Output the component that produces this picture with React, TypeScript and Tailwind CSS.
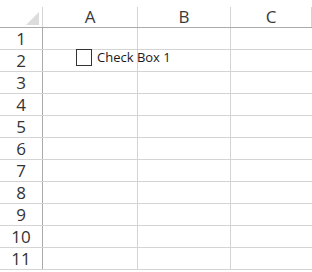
const rows = Array.from({ length: 11 }, (_, i) => i + 1);
const cols = ["A", "B", "C"];
const colWidths = ["w-[95px]", "w-[93px]", "flex-1"];

export default function App() {
  return (
    <div className="h-[272px] w-[312px] overflow-hidden bg-white font-['Open_Sans',sans-serif] text-[#3a3a3a]">
      {/* column headers */}
      <div className="flex h-[28px] border-b border-[#ababab]">
        <div className="relative w-[43px] shrink-0 pt-[7px]">
          <div className="h-[20px] border-r border-[#d4d4d4]" />
          <svg className="absolute left-[26px] top-[12px]" width="13" height="13" viewBox="0 0 13 13">
            <polygon points="13,0 13,13 0,13" fill="#dcdcdc" />
          </svg>
        </div>
        {cols.map((c, i) => (
          <div key={c} className={`${colWidths[i]} shrink-0 pt-[7px]`}>
            <div className="flex h-[20px] items-center justify-center border-r border-[#d4d4d4] pb-[1px] text-[17px] leading-none">
              {c}
            </div>
          </div>
        ))}
      </div>

      {/* rows */}
      {rows.map((r) => (
        <div key={r} className="flex h-[22px] border-b border-[#d4d4d4]">
          <div className="flex w-[43px] shrink-0 items-center justify-center border-r border-[#ababab] text-[17px] leading-none text-[#333]">
            {r}
          </div>
          <div className="relative w-[95px] shrink-0 border-r border-[#d4d4d4]">
            {r === 2 && (
              <label className="absolute left-[33px] top-[-2px] z-10 flex items-center gap-[5px] whitespace-nowrap text-[13px] text-[#1a1a1a]">
                <span className="h-[17px] w-[16px] border border-[#333] bg-white" />
                Check Box 1
              </label>
            )}
          </div>
          <div className="w-[93px] shrink-0 border-r border-[#d4d4d4]" />
          <div className="flex-1" />
        </div>
      ))}
    </div>
  );
}
